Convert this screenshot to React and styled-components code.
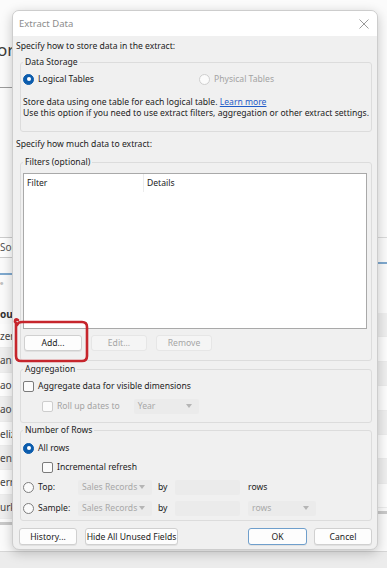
import React from "react";
import styled, { createGlobalStyle } from "styled-components";

const GlobalStyle = createGlobalStyle`
  html, body { margin: 0; padding: 0; }
  body {
    font-family: "Noto Sans", "Open Sans", sans-serif;
    font-size: 8.6px;
    color: #1b1b1b;
  }
`;

const Screen = styled.div`
  position: relative;
  width: 387px;
  height: 568px;
  overflow: hidden;
  background: #fbfbfb;
`;

/* ---------- background application (mostly hidden by the dialog) ---------- */

const Backdrop = styled.div`
  display: grid;
  grid-template-columns: 1fr 1fr;
  height: 551px;
`;

const Pane = styled.div`
  display: flex;
  flex-direction: column;
  min-width: 0;
  overflow: hidden;
  white-space: nowrap;
`;

const PaneTitle = styled.div`
  height: 88px;
  box-sizing: border-box;
  border-bottom: ${(p) => (p.$ruled ? "1px solid #9c9c9c" : "none")};
  padding-top: 39px;
  font-size: 17px;
  line-height: 22px;
  text-indent: -3px;
  color: #3c3c3c;
`;

const SearchBox = styled.div`
  margin-top: 149px;
  height: 19px;
  margin-left: -4px;
  border: 1px solid #cdcdcd;
  background: #fff;
  padding-left: 3px;
  line-height: 19px;
  font-size: 10px;
  color: #555;
`;

const PaneCaption = styled.div`
  margin-top: 132px;
  height: 17px;
  border-bottom: 1px solid #dadada;
  font-size: 11px;
  line-height: 17px;
  color: #333;
`;

const AccentRule = styled.div`
  margin-top: ${(p) => p.$top}px;
  height: 2px;
  background: #7fa9cf;
`;

const Note = styled.div`
  height: 29px;
  font-size: 6px;
  color: #a0a0a0;
  padding-top: 4px;
  box-sizing: border-box;
`;

const HeadCell = styled.div`
  height: 20px;
  font-size: 10px;
  font-weight: 700;
  line-height: 20px;
  color: #333;
`;

const Row = styled.div`
  height: 24.4px;
  line-height: 24.4px;
  font-size: 10px;
  color: #444;
  background: ${(p) => (p.$alt ? "#efefef" : "#fdfdfd")};
  border-bottom: 1px solid #ececec;
  box-sizing: border-box;
`;

const ScrollTrack = styled.div`
  height: 3px;
  margin-top: 3px;
  background: #c9c9c9;
`;

const StatusBar = styled.div`
  height: 17px;
  border-top: 1px solid #d6d6d6;
  background: #ececec;
`;

/* ---------- dialog ---------- */

const Dialog = styled.div`
  position: absolute;
  left: 12px;
  top: 10px;
  width: 366px;
  height: 540px;
  box-sizing: border-box;
  border: 1px solid #cdcdcd;
  border-radius: 7px;
  background: #f0f0f0;
  box-shadow: 0 3px 12px rgba(0, 0, 0, 0.22);
  overflow: hidden;
  display: flex;
  flex-direction: column;
`;

const TitleBar = styled.div`
  height: 25px;
  flex: none;
  background: #fff;
  display: flex;
  align-items: center;
  justify-content: space-between;
  padding: 0 8px 0 6px;
`;

const Title = styled.span`
  font-size: 9.5px;
  color: #8c8c8c;
`;

const Body = styled.div`
  flex: 1;
  display: flex;
  flex-direction: column;
  padding: 0 5px 0 3px;
  white-space: nowrap;
`;

const Lead = styled.div`
  height: 20px;
  line-height: 20px;
  margin-top: ${(p) => p.$top || 0}px;
`;

const Group = styled.fieldset`
  margin: ${(p) => p.$top || 0}px 0 0 4px;
  padding: ${(p) => p.$pad};
  border: 1px solid #dcdcdc;
  border-radius: 3px;
  min-width: 0;
  display: flex;
  flex-direction: column;
`;

const Legend = styled.legend`
  padding: 0 2px;
  margin-left: 0;
  line-height: 12px;
  color: #222;
`;

const Line = styled.div`
  display: flex;
  align-items: center;
  height: ${(p) => p.$h || 16}px;
  margin-top: ${(p) => p.$top || 0}px;
  padding-left: ${(p) => p.$indent || 0}px;
  gap: 4px;
  color: ${(p) => (p.$muted ? "#a3a3a3" : "#1b1b1b")};
`;

const StorageOptions = styled.div`
  display: grid;
  grid-template-columns: 176px 1fr;
  height: 16px;
  align-items: center;
`;

const Hint = styled.p`
  margin: 10px 0 0;
  line-height: 11px;
`;

const Link = styled.a`
  color: #1f5bc7;
  text-decoration: underline;
`;

const Radio = styled.span`
  width: 11px;
  height: 11px;
  flex: none;
  box-sizing: border-box;
  border-radius: 50%;
  display: inline-flex;
  align-items: center;
  justify-content: center;
  background: ${(p) => (p.$on ? "#0b5cad" : "#fbfbfb")};
  border: 1px solid ${(p) => (p.$on ? "#0b5cad" : p.$muted ? "#cfcfcf" : "#7e7e7e")};
  &::after {
    content: "";
    width: 4px;
    height: 4px;
    border-radius: 50%;
    background: ${(p) => (p.$on ? "#fff" : "transparent")};
  }
`;

const Check = styled.span`
  width: 11px;
  height: 11px;
  flex: none;
  box-sizing: border-box;
  border-radius: 2px;
  background: #fbfbfb;
  border: 1px solid ${(p) => (p.$muted ? "#cdcdcd" : "#7b7b7b")};
`;

const ListBox = styled.div`
  height: 156px;
  box-sizing: border-box;
  border: 1px solid #a9a9a9;
  background: #fff;
`;

const ListHead = styled.div`
  display: grid;
  grid-template-columns: 120px 1fr;
  height: 18px;
`;

const HeadLabel = styled.div`
  padding-left: 3px;
  line-height: 18px;
  border-right: ${(p) => (p.$split ? "1px solid #ececec" : "none")};
`;

const ButtonRow = styled.div`
  display: flex;
  gap: ${(p) => p.$gap || 9}px;
  margin-top: ${(p) => p.$top || 0}px;
  padding-left: ${(p) => p.$indent || 0}px;
`;

const Button = styled.button`
  width: ${(p) => p.$w}px;
  height: ${(p) => p.$h || 16}px;
  padding: 0;
  box-sizing: border-box;
  font: inherit;
  white-space: nowrap;
  border-radius: 3px;
  border: 1px solid ${(p) => (p.$primary ? "#6f9fcc" : p.$muted ? "#e6e6e6" : "#d0d0d0")};
  background: ${(p) => (p.$muted ? "#f5f5f5" : "#fdfdfd")};
  color: ${(p) => (p.$muted ? "#a5a5a5" : "#1b1b1b")};
  box-shadow: ${(p) => (p.$muted ? "none" : "0 1px 0 rgba(0,0,0,0.06)")};
`;

const Spacer = styled.div`
  flex: 1;
`;

const Gap = styled.span`
  width: ${(p) => p.$w}px;
  flex: none;
`;

const Select = styled.div`
  width: ${(p) => p.$w}px;
  height: 15px;
  box-sizing: border-box;
  background: #ebebeb;
  border-radius: 2px;
  display: flex;
  align-items: center;
  justify-content: space-between;
  padding: 0 7px 0 4px;
  color: #a8a8a8;
  flex: none;
`;

const Field = styled.div`
  width: 65px;
  height: 15px;
  background: #ebebeb;
  border-radius: 2px;
  flex: none;
`;

const RowGrid = styled.div`
  display: grid;
  grid-template-columns: 15px 40px 74px 23px 65px 8px auto;
  align-items: center;
  height: 16px;
  margin-top: ${(p) => p.$top || 0}px;
`;

const By = styled.span`
  padding-left: 6px;
`;

const Unit = styled.span`
  grid-column: 7;
`;

const Marker = styled.svg`
  position: absolute;
  left: 12px;
  top: 312px;
  pointer-events: none;
`;

function Caret() {
  return (
    <svg width="6" height="4" viewBox="0 0 6 4">
      <path d="M0 0h6L3 4z" fill="#b5b5b5" />
    </svg>
  );
}

function CloseIcon() {
  return (
    <svg width="10" height="10" viewBox="0 0 10 10">
      <path d="M0.5 0.5l9 9M9.5 0.5l-9 9" stroke="#9a9a9a" strokeWidth="1" />
    </svg>
  );
}

const leftRows = ["zerbaijan", "anada", "ao Paulo", "aola", "elize", "ensburg", "erra Leone", "urkey"];
const rightRows = ["", "", "", "", "", "", "", ""];

export default function App() {
  return (
    <Screen>
      <GlobalStyle />
      <Backdrop>
        <Pane>
          <PaneTitle $ruled>or Data Source</PaneTitle>
          <SearchBox>Sort fields</SearchBox>
          <AccentRule $top={15} />
          <Note>e</Note>
          <HeadCell>ountry</HeadCell>
          {leftRows.map((r, i) => (
            <Row key={i} $alt={i % 2 === 1}>{r}</Row>
          ))}
          <ScrollTrack />
        </Pane>
        <Pane>
          <PaneTitle />
          <PaneCaption>Connection</PaneCaption>
          <AccentRule $top={24} />
          <Note />
          <HeadCell>City</HeadCell>
          {rightRows.map((r, i) => (
            <Row key={i} $alt={i % 2 === 0}>{r}</Row>
          ))}
          <ScrollTrack />
        </Pane>
      </Backdrop>
      <StatusBar />

      <Dialog>
        <TitleBar>
          <Title>Extract Data</Title>
          <CloseIcon />
        </TitleBar>
        <Body>
          <Lead>Specify how to store data in the extract:</Lead>
          <Group $top={0} $pad="3px 4px 12px 2px">
            <Legend>Data Storage</Legend>
            <StorageOptions>
              <Line>
                <Radio $on />
                Logical Tables
              </Line>
              <Line $muted>
                <Radio $muted />
                Physical Tables
              </Line>
            </StorageOptions>
            <Hint>
              Store data using one table for each logical table. <Link>Learn more</Link>
              <br />
              Use this option if you need to use extract filters, aggregation or other extract settings.
            </Hint>
          </Group>

          <Lead $top={2}>Specify how much data to extract:</Lead>
          <Group $top={2} $pad="5px 4px 9px 2px">
            <Legend>Filters (optional)</Legend>
            <ListBox>
              <ListHead>
                <HeadLabel $split>Filter</HeadLabel>
                <HeadLabel>Details</HeadLabel>
              </ListHead>
            </ListBox>
            <ButtonRow $top={6} $indent={1} $gap={9}>
              <Button $w={58}>Add...</Button>
              <Button $w={56} $muted>Edit...</Button>
              <Button $w={56} $muted>Remove</Button>
            </ButtonRow>
          </Group>

          <Group $top={2} $pad="3px 4px 8px 2px">
            <Legend>Aggregation</Legend>
            <Line>
              <Check />
              Aggregate data for visible dimensions
            </Line>
            <Line $top={4} $indent={19} $muted>
              <Check $muted />
              Roll up dates to
              <Gap $w={6} />
              <Select $w={65}>
                Year
                <Caret />
              </Select>
            </Line>
          </Group>

          <Group $top={1} $pad="4px 4px 4px 2px">
            <Legend>Number of Rows</Legend>
            <Line>
              <Radio $on />
              All rows
            </Line>
            <Line $top={3} $indent={19}>
              <Check />
              Incremental refresh
            </Line>
            <RowGrid $top={4}>
              <Radio />
              <span>Top:</span>
              <Select $w={74}>
                Sales Records
                <Caret />
              </Select>
              <By>by</By>
              <Field />
              <Unit>rows</Unit>
            </RowGrid>
            <RowGrid $top={5}>
              <Radio />
              <span>Sample:</span>
              <Select $w={74}>
                Sales Records
                <Caret />
              </Select>
              <By>by</By>
              <Field />
              <Unit>
                <Select $w={68}>
                  rows
                  <Caret />
                </Select>
              </Unit>
            </RowGrid>
          </Group>

          <ButtonRow $top={7} $indent={3} $gap={8}>
            <Button $w={58} $h={17}>History...</Button>
            <Button $w={93} $h={17}>Hide All Unused Fields</Button>
            <Spacer />
            <ButtonRow $gap={7}>
              <Button $w={59} $h={17} $primary>OK</Button>
              <Button $w={58} $h={17}>Cancel</Button>
            </ButtonRow>
          </ButtonRow>
        </Body>
      </Dialog>

      <Marker width="82" height="52" viewBox="0 0 82 52">
        <path
          d="M6 8 C3 6 2 9 4 11 L4 44 Q4 49 9 49 L70 49 Q75 49 75 44 L75 15 Q75 10 70 10 L10 10 Q6 10 5 13"
          fill="none"
          stroke="#c6252c"
          strokeWidth="2.6"
          strokeLinecap="round"
        />
      </Marker>
    </Screen>
  );
}
